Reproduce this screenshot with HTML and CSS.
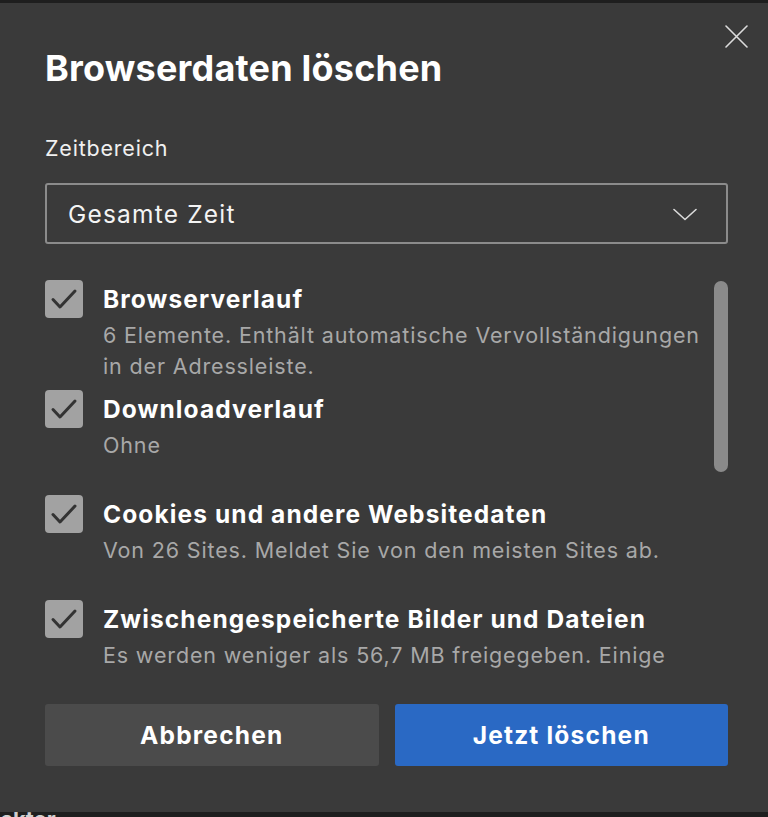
FILE: index.html
```html
<!DOCTYPE html>
<html lang="de">
<head>
<meta charset="utf-8">
<title>Browserdaten löschen</title>
<link rel="stylesheet" href="styles.css">
</head>
<body>
<div class="dialog">
  <button class="close" aria-label="Schließen">
    <svg width="23" height="23" viewBox="0 0 23 23"><path d="M1 1 L22 22 M22 1 L1 22" stroke="#dcdcdc" stroke-width="1.6" fill="none" stroke-linecap="round"/></svg>
  </button>
  <h1 class="title">Browserdaten löschen</h1>
  <div class="label">Zeitbereich</div>
  <div class="select">
    <span>Gesamte Zeit</span>
    <svg class="chev" width="24" height="13" viewBox="0 0 24 13"><path d="M1 1.5 L12 11.5 L23 1.5" stroke="#dcdcdc" stroke-width="1.6" fill="none" stroke-linecap="round" stroke-linejoin="round"/></svg>
  </div>
  <div class="list">
    <div class="item">
      <span class="box"><svg width="38" height="38" viewBox="0 0 38 38"><path d="M8 19.5 L15 27 L30 11" stroke="#333" stroke-width="3" fill="none" stroke-linecap="round" stroke-linejoin="round"/></svg></span>
      <div class="text">
        <div class="name">Browserverlauf</div>
        <div class="desc">6 Elemente. Enthält automatische Vervollständigungen in der Adressleiste.</div>
      </div>
    </div>
    <div class="item">
      <span class="box"><svg width="38" height="38" viewBox="0 0 38 38"><path d="M8 19.5 L15 27 L30 11" stroke="#333" stroke-width="3" fill="none" stroke-linecap="round" stroke-linejoin="round"/></svg></span>
      <div class="text">
        <div class="name">Downloadverlauf</div>
        <div class="desc">Ohne</div>
      </div>
    </div>
    <div class="item">
      <span class="box"><svg width="38" height="38" viewBox="0 0 38 38"><path d="M8 19.5 L15 27 L30 11" stroke="#333" stroke-width="3" fill="none" stroke-linecap="round" stroke-linejoin="round"/></svg></span>
      <div class="text">
        <div class="name">Cookies und andere Websitedaten</div>
        <div class="desc">Von 26 Sites. Meldet Sie von den meisten Sites ab.</div>
      </div>
    </div>
    <div class="item">
      <span class="box"><svg width="38" height="38" viewBox="0 0 38 38"><path d="M8 19.5 L15 27 L30 11" stroke="#333" stroke-width="3" fill="none" stroke-linecap="round" stroke-linejoin="round"/></svg></span>
      <div class="text">
        <div class="name">Zwischengespeicherte Bilder und Dateien</div>
        <div class="desc">Es werden weniger als 56,7 MB freigegeben. Einige Websites werden bei Ihrem nächsten Besuch möglicherweise langsamer geladen.</div>
      </div>
    </div>
    <div class="thumb"></div>
  </div>
  <div class="actions">
    <button class="btn cancel">Abbrechen</button>
    <button class="btn primary">Jetzt löschen</button>
  </div>
</div>
<div class="under">ckter</div>
</body>
</html>
```

FILE: styles.css
```css
html, body {
  margin: 0;
  padding: 0;
}
body {
  width: 768px;
  height: 817px;
  overflow: hidden;
  background: #1e1e1e;
  font-family: Inter, "Noto Sans", "Liberation Sans", sans-serif;
  color: #fff;
}
.dialog {
  position: relative;
  margin-top: 3px;
  height: 809px;
  box-sizing: border-box;
  background: #3a3a3a;
  padding: 43px 40px 0 45px;
  display: flex;
  flex-direction: column;
}
.close {
  position: absolute;
  top: 22px;
  right: 20px;
  width: 23px;
  height: 23px;
  padding: 0;
  border: 0;
  background: none;
  display: flex;
}
.title {
  margin: 0;
  font-size: 36px;
  line-height: 44px;
  font-weight: 700;
  letter-spacing: 0.2px;
  color: #fff;
}
.label {
  margin-top: 46px;
  font-size: 21.5px;
  line-height: 24px;
  letter-spacing: 0.8px;
  color: #f0f0f0;
}
.select {
  margin-top: 23px;
  height: 61px;
  box-sizing: border-box;
  border: 2px solid #8b8b8b;
  border-radius: 3px;
  display: flex;
  align-items: center;
  justify-content: space-between;
  padding: 0 29px 0 21px;
  font-size: 24.5px;
  letter-spacing: 1.2px;
  color: #f4f4f4;
}
.chev {
  margin-top: 2px;
}
.list {
  position: relative;
  margin-top: 36px;
  height: 394px;
  overflow: hidden;
}
.item {
  display: flex;
  gap: 20px;
  min-height: 105px;
  padding-bottom: 8px;
  box-sizing: border-box;
}
.box {
  flex: none;
  width: 38px;
  height: 38px;
  border-radius: 4px;
  background: #a2a2a2;
  display: flex;
}
.text {
  width: 606px;
}
.name {
  font-size: 24.5px;
  line-height: 38px;
  font-weight: 700;
  letter-spacing: 1.1px;
  color: #fff;
}
.desc {
  margin-top: 2px;
  font-size: 21.5px;
  line-height: 31px;
  letter-spacing: 0.85px;
  color: #a8a8a8;
}
.thumb {
  position: absolute;
  right: 0;
  top: 1px;
  width: 14px;
  height: 191px;
  border-radius: 7px;
  background: #8a8a8a;
}
.actions {
  margin-top: 30px;
  display: flex;
  gap: 16px;
}
.btn {
  flex: 1;
  height: 62px;
  border: 0;
  border-radius: 3px;
  font-family: inherit;
  font-size: 24.5px;
  line-height: 30px;
  font-weight: 700;
  letter-spacing: 1.2px;
  color: #fff;
}
.cancel {
  background: #4b4b4b;
}
.primary {
  background: #2a69c4;
}
.under {
  height: 5px;
  overflow: hidden;
  font-size: 22px;
  line-height: 14px;
  font-weight: 700;
  color: #cfcfcf;
}
```
